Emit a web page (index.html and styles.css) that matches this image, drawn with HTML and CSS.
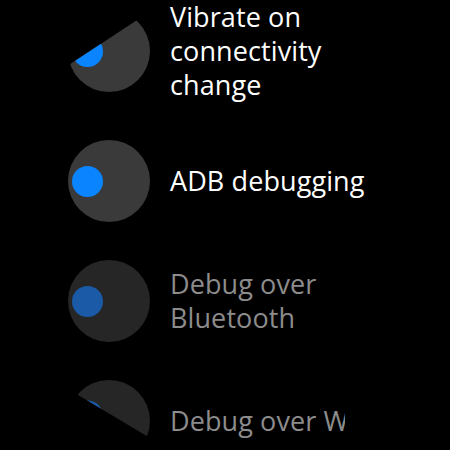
FILE: index.html
```html
<!DOCTYPE html>
<html>
<head>
<meta charset="utf-8">
<link rel="stylesheet" href="styles.css">
</head>
<body>
<div class="list">
  <div class="row row-first">
    <div class="toggle clip-top"><span class="dot"></span></div>
    <div class="label">Vibrate on<br>connectivity<br>change</div>
  </div>
  <div class="row">
    <div class="toggle"><span class="dot"></span></div>
    <div class="label">ADB debugging</div>
  </div>
  <div class="row dim">
    <div class="toggle"><span class="dot"></span></div>
    <div class="label">Debug over<br>Bluetooth</div>
  </div>
  <div class="row dim">
    <div class="toggle clip-bottom"><span class="dot"></span></div>
    <div class="label cut">Debug over Wi-Fi</div>
  </div>
</div>
</body>
</html>
```

FILE: styles.css
```css
html, body {
  margin: 0;
  padding: 0;
  background: #000;
  width: 450px;
  height: 450px;
  overflow: hidden;
}
.list {
  display: flex;
  flex-direction: column;
  gap: 38px;
  padding-left: 68px;
  margin-top: 0;
}
.row {
  display: flex;
  align-items: center;
  gap: 20px;
}
.toggle {
  position: relative;
  width: 82px;
  height: 82px;
  flex: 0 0 82px;
  border-radius: 50%;
  background: #3a3a3a;
  display: flex;
  align-items: center;
  padding-left: 4px;
  box-sizing: border-box;
}
.dot {
  width: 31px;
  height: 31px;
  border-radius: 50%;
  background: #0a84ff;
}
.label {
  font-family: "Open Sans", "Liberation Sans", sans-serif;
  font-size: 27px;
  line-height: 34px;
  color: #fff;
  white-space: nowrap;
  letter-spacing: 0.1px;
}
.dim .toggle { background: #262626; }
.dim .dot { background: #1a5aa6; }
.dim .label { color: #8c8c8c; }
.clip-top {
  clip-path: polygon(0 55.6px, 82px 1.4px, 82px 82px, 0 82px);
}
.clip-bottom {
  clip-path: polygon(0 0, 82px 0, 82px 58px, 0 9px);
}
.clip-bottom .dot {
  transform: translateY(-5.5px);
}
.cut {
  width: 175px;
  overflow: hidden;
}
```
